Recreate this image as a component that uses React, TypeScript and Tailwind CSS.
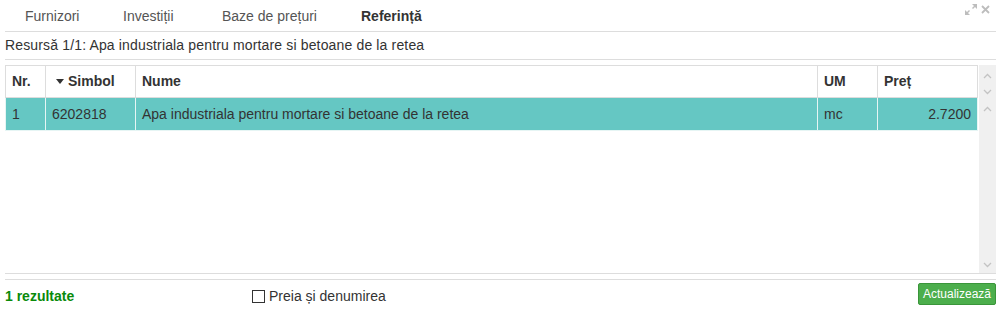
import { useState } from "react"

const Chevron = ({ up }: { up?: boolean }) => (
    <svg width="9" height="6" viewBox="0 0 9 6" className="block">
        <polyline
            points={up ? "1,5 4.5,1.5 8,5" : "1,1 4.5,4.5 8,1"}
            fill="none"
            stroke="#c3c3c3"
            strokeWidth="1.3"
        />
    </svg>
)

const tabs = [
    { label: "Furnizori", w: "w-[98px]" },
    { label: "Investiții", w: "w-[99px]" },
    { label: "Baze de prețuri", w: "w-[139px]" },
    { label: "Referință", w: "w-[100px]", active: true },
]

const App = () => {
    const [takeName, setTakeName] = useState(false)

    return (
        <div className="w-[1001px] h-[309px] bg-white text-[14px] text-[#333] font-['Liberation_Sans',Arial,sans-serif] flex flex-col px-[5px] overflow-hidden">
            {/* tabs */}
            <div className="h-[32px] flex items-center border-b border-[#ddd] relative">
                {tabs.map((t) => (
                    <div
                        key={t.label}
                        className={`${t.w} pl-[20px] pt-[1px] ${t.active ? "font-bold text-[#333]" : "text-[#555]"}`}
                    >
                        {t.label}
                    </div>
                ))}
                <div className="ml-auto mr-[6px] mb-[12px] flex items-center gap-[4px]">
                    <svg width="12" height="11" viewBox="0 0 12 11">
                        <polygon points="12,0 7,0 12,5" fill="#bdbdbd" />
                        <line x1="10.5" y1="1.5" x2="7.5" y2="4.5" stroke="#bdbdbd" strokeWidth="1.4" />
                        <polygon points="0,11 5,11 0,6" fill="#bdbdbd" />
                        <line x1="1.5" y1="9.5" x2="4.5" y2="6.5" stroke="#bdbdbd" strokeWidth="1.4" />
                    </svg>
                    <svg width="9" height="9" viewBox="0 0 9 9">
                        <path d="M1 1 L8 8 M8 1 L1 8" stroke="#bdbdbd" strokeWidth="1.8" />
                    </svg>
                </div>
            </div>

            {/* resource line */}
            <div className="h-[28px] flex items-center border-b border-[#ddd] tracking-[0.15px]">
                Resursă 1/1: Apa industriala pentru mortare si betoane de la retea
            </div>

            {/* table */}
            <div className="mt-[5px] h-[209px] flex border-b border-[#ddd]">
                <div className="w-[973px] flex flex-col">
                    <div className="flex h-[33px] border border-[#ddd] font-bold">
                        <div className="w-[40px] pl-[6px] flex items-center border-r border-[#ddd]">Nr.</div>
                        <div className="w-[90px] pl-[10px] flex items-center border-r border-[#ddd]">
                            <svg width="8" height="5" viewBox="0 0 8 5" className="mr-[4px]">
                                <polygon points="0,0 8,0 4,5" fill="#333" />
                            </svg>
                            Simbol
                        </div>
                        <div className="w-[682px] pl-[6px] flex items-center border-r border-[#ddd]">Nume</div>
                        <div className="w-[60px] pl-[6px] flex items-center border-r border-[#ddd]">UM</div>
                        <div className="flex-1 pl-[6px] flex items-center">Preț</div>
                    </div>
                    <div className="flex h-[33px] bg-[#65c7c3] border-x border-b border-[#e6f5f4]">
                        <div className="w-[40px] pl-[6px] flex items-center border-r border-[#e6f5f4]">1</div>
                        <div className="w-[90px] pl-[6px] flex items-center border-r border-[#e6f5f4]">6202818</div>
                        <div className="w-[682px] pl-[6px] flex items-center border-r border-[#e6f5f4]">
                            Apa industriala pentru mortare si betoane de la retea
                        </div>
                        <div className="w-[60px] pl-[6px] flex items-center border-r border-[#e6f5f4]">mc</div>
                        <div className="flex-1 pr-[6px] flex items-center justify-end">2.7200</div>
                    </div>
                </div>
                <div className="w-[17px] ml-[1px] bg-[#f0f0f0] flex flex-col items-center">
                    <div className="mt-[8px]"><Chevron up /></div>
                    <div className="mt-[10px]"><Chevron /></div>
                    <div className="mt-[11px]"><Chevron up /></div>
                    <div className="mt-auto mb-[5px]"><Chevron /></div>
                </div>
            </div>

            {/* footer */}
            <div className="mt-[5px] border-t border-[#ddd] flex-1 flex items-center">
                <div className="w-[247px] pt-[3px] font-bold text-[#0a8a0a]">1 rezultate</div>
                <label className="flex items-center gap-[4px] pt-[3px] text-[#333] cursor-pointer">
                    <input
                        type="checkbox"
                        checked={takeName}
                        onChange={() => setTakeName(!takeName)}
                        className="appearance-none w-[13px] h-[13px] border border-[#333] bg-white m-0"
                    />
                    Preia și denumirea
                </label>
                <button className="ml-auto h-[22px] px-[4px] bg-[#4cae4c] border border-[#3a953a] rounded-[2px] text-white text-[12px] mb-[1px]">
                    Actualizează
                </button>
            </div>
        </div>
    )
}

export default App
